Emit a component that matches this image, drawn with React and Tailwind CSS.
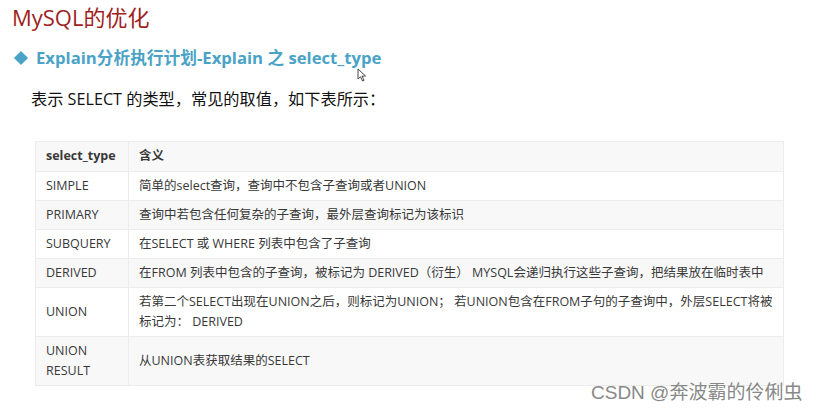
import React from "react";

const rows = [
  ["SIMPLE", "简单的select查询，查询中不包含子查询或者UNION", "bg-white"],
  ["PRIMARY", "查询中若包含任何复杂的子查询，最外层查询标记为该标识", "bg-[#f8f8f8]"],
  ["SUBQUERY", "在SELECT 或 WHERE 列表中包含了子查询", "bg-white"],
  ["DERIVED", "在FROM 列表中包含的子查询，被标记为 DERIVED（衍生） MYSQL会递归执行这些子查询，把结果放在临时表中", "bg-[#f8f8f8]"],
  ["UNION", (<>若第二个SELECT出现在UNION之后，则标记为UNION； 若UNION包含在FROM子句的子查询中，外层SELECT将被<br />标记为： DERIVED</>), "bg-white"],
  ["UNION RESULT", "从UNION表获取结果的SELECT", "bg-[#f8f8f8]"],
];

export default function App() {
  return (
    <div
      className="relative w-[818px] h-[413px] bg-white overflow-hidden"
      style={{ fontFamily: '"Open Sans", "Noto Sans CJK SC", sans-serif' }}
    >
      <div className="pl-[12px] pt-[2px] text-[22px] leading-[30px] text-[#9e1f1f]">
        MySQL的优化
      </div>
      <div className="flex items-center pl-[14px] mt-[11px] h-[30px]">
        <span className="w-[10px] h-[10px] bg-[#4aa3c6] rotate-45 ml-[2px]" />
        <span className="ml-[10px] text-[16.7px] font-bold text-[#4aa3c6] leading-[30px] whitespace-nowrap">
          Explain分析执行计划-Explain 之 select_type
        </span>
      </div>
      <div className="pl-[31px] mt-[14px] text-[16.2px] leading-[24px] text-[#111] whitespace-nowrap">
        表示 SELECT 的类型，常见的取值，如下表所示：
      </div>
      <div className="ml-[35px] mt-[30px] w-[749px] border border-[#ececec] text-[12.5px] text-[#383838]">
        <div className="flex bg-[#f8f8f8] border-b border-[#ececec] h-[30px] items-center font-bold">
          <div className="w-[93px] shrink-0 pl-[10px] h-full flex items-center border-r border-[#ececec]">select_type</div>
          <div className="pl-[10px]">含义</div>
        </div>
        {rows.map(([k, v, bg], i) => (
          <div key={k} className={`flex ${bg} ${i < rows.length - 1 ? "border-b border-[#ececec]" : ""}`}>
            <div className="w-[93px] shrink-0 pl-[10px] pr-[6px] py-[4px] leading-[20px] flex items-center border-r border-[#ececec]">
              {k}
            </div>
            <div className="pl-[10px] pr-[4px] py-[4px] leading-[20px] flex items-center whitespace-nowrap">{v}</div>
          </div>
        ))}
      </div>
      <svg className="absolute left-[357px] top-[68px]" width="10" height="14" viewBox="0 0 10 14">
        <path d="M1 1 L1 11 L3.5 8.8 L5.5 13 L7 12.3 L5 8.2 L8.5 8 Z" fill="white" stroke="#333" strokeWidth="0.9" />
      </svg>
      <div
        className="absolute left-[591px] top-[381px] text-[19px] leading-[24px] text-[#888] whitespace-nowrap"
        style={{ fontFamily: '"Liberation Sans", "Noto Sans CJK SC", sans-serif' }}
      >
        CSDN @奔波霸的伶俐虫
      </div>
    </div>
  );
}
